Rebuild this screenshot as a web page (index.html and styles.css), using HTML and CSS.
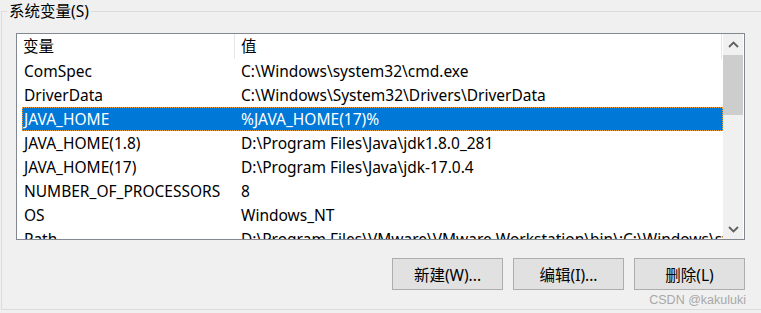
FILE: index.html
```html
<html>
<head>
    <title>环境变量</title>
    <link rel="stylesheet" href="styles.css">
</head>
<body>
    <fieldset class="group">
        <legend>系统变量(S)</legend>
        <div class="listview">
            <div class="list-main">
                <div class="list-head">
                    <div class="head-cell">变量</div>
                    <div class="head-cell">值</div>
                </div>
                <div class="rows">
                    <div class="row"><span>ComSpec</span><span>C:\Windows\system32\cmd.exe</span></div>
                    <div class="row"><span>DriverData</span><span>C:\Windows\System32\Drivers\DriverData</span></div>
                    <div class="row selected"><span>JAVA_HOME</span><span>%JAVA_HOME(17)%</span></div>
                    <div class="row"><span>JAVA_HOME(1.8)</span><span>D:\Program Files\Java\jdk1.8.0_281</span></div>
                    <div class="row"><span>JAVA_HOME(17)</span><span>D:\Program Files\Java\jdk-17.0.4</span></div>
                    <div class="row"><span>NUMBER_OF_PROCESSORS</span><span>8</span></div>
                    <div class="row"><span>OS</span><span>Windows_NT</span></div>
                    <div class="row"><span>Path</span><span>D:\Program Files\VMware\VMware Workstation\bin\;C:\Windows\system32;C:\Windows</span></div>
                </div>
            </div>
            <div class="scrollbar">
                <div class="scroll-btn">
                    <svg width="11" height="7" viewBox="0 0 11 7"><polyline points="1,6 5.5,1.5 10,6" fill="none" stroke="#606060" stroke-width="1.8"/></svg>
                </div>
                <div class="scroll-track">
                    <div class="scroll-thumb"></div>
                </div>
                <div class="scroll-btn">
                    <svg width="11" height="7" viewBox="0 0 11 7"><polyline points="1,1 5.5,5.5 10,1" fill="none" stroke="#606060" stroke-width="1.8"/></svg>
                </div>
            </div>
        </div>
        <div class="actions">
            <button>新建(W)...</button>
            <button>编辑(I)...</button>
            <button>删除(L)</button>
        </div>
    </fieldset>
    <div class="watermark">CSDN @kakuluki</div>
</body>
</html>
```

FILE: styles.css
```css
html, body {
    margin: 0;
    overflow: hidden;
}
body {
    background: #f0f0f0;
    font-family: "Noto Sans", "Noto Sans CJK SC", sans-serif;
    font-size: 15.5px;
    color: #000;
    width: 761px;
    height: 313px;
    position: relative;
}
.group {
    margin: 1px 0 0 1px;
    width: 790px;
    padding: 12px 0 19px 14px;
    border: 1px solid #dcdcdc;
    box-sizing: border-box;
}
.group legend {
    margin-left: -9px;
    padding: 0 2px;
    line-height: 20px;
}
.listview {
    display: flex;
    width: 729px;
    height: 207px;
    box-sizing: border-box;
    border: 1px solid #828790;
    background: #fff;
    overflow: hidden;
}
.list-main {
    flex: 1;
    overflow: hidden;
}
.list-head {
    display: flex;
    height: 25px;
}
.head-cell {
    line-height: 25px;
    padding-left: 6px;
    border-right: 1px solid #e5e5e5;
    box-sizing: border-box;
}
.head-cell:first-child {
    width: 218px;
}
.head-cell:last-child {
    width: 487px;
}
.rows {
    margin-left: 5px;
}
.row {
    display: grid;
    grid-template-columns: 217px 1fr;
    padding-left: 2px;
    height: 24px;
    line-height: 24px;
    white-space: nowrap;
    overflow: hidden;
}
.row.selected {
    background: #0078d7;
    color: #fff;
    outline: 1px dotted #f0a040;
    outline-offset: -1px;
}
.scrollbar {
    width: 20px;
    margin-right: 1px;
    background: #f0f0f0;
    display: flex;
    flex-direction: column;
}
.scroll-btn {
    height: 20px;
    display: flex;
    align-items: center;
    justify-content: center;
}
.scroll-track {
    flex: 1;
    padding-top: 1px;
}
.scroll-thumb {
    height: 60px;
    background: #cdcdcd;
}
.actions {
    display: flex;
    justify-content: flex-end;
    gap: 10px;
    width: 729px;
    margin-top: 18px;
}
.actions button {
    width: 111px;
    height: 32px;
    background: #e1e1e1;
    border: 1px solid #adadad;
    font-family: "Noto Sans", "Noto Sans CJK SC", sans-serif;
    font-size: 15.5px;
    color: #000;
    padding: 0;
}
.watermark {
    position: absolute;
    right: 15px;
    bottom: 6px;
    font-family: "Liberation Sans", sans-serif;
    font-size: 12.5px;
    color: #a8a8a8;
}
```
